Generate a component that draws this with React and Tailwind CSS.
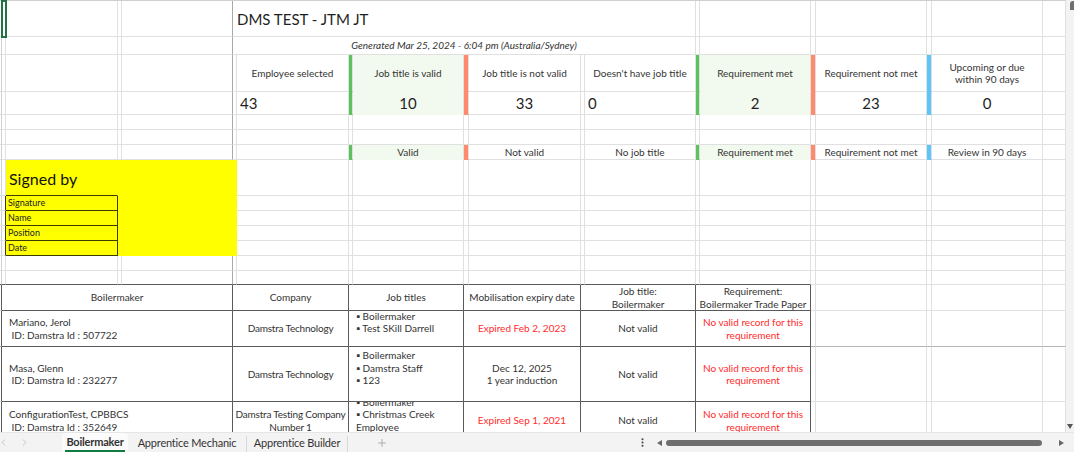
import clsx from 'clsx'
import { ChevronLeft, ChevronRight, Plus, EllipsisVertical } from 'lucide-react'

// column widths of the sheet (z = row gutter)
const COLS = ['z', 'a', 'b', 'c', 'd', 'e', 'f', 'g', 'h', 'i', 'j', 'k', 'l', 'M', 'n', 'o', 'p', 'q', 'r', 's']
const W = {
  z: 'w-[2px]', a: 'w-[4px]', b: 'w-[112px]', c: 'w-[4px]', d: 'w-[111px]', e: 'w-[4px]',
  f: 'w-[112px]', g: 'w-[4px]', h: 'w-[111px]', i: 'w-[5px]', j: 'w-[112px]', k: 'w-[4px]',
  l: 'w-[111px]', M: 'w-[4px]', n: 'w-[111px]', o: 'w-[5px]', p: 'w-[111px]', q: 'w-[5px]',
  r: 'w-[111px]', s: 'w-[23px]',
}

const GREEN = 'bg-[#5cc35c] border-b-[#5cc35c]'
const RED = 'bg-[#ff8a6e] border-b-[#ff8a6e]'
const BLUE = 'bg-[#5cc6fa] border-b-[#5cc6fa]'
const MINT = 'bg-[#f2f9ee] border-b-[#f2f9ee]'
const YELLOW = 'bg-[#ffff00] border-b-[#ffff00] border-r-[#ffff00]'

function Cell({ w, className, children }) {
  return (
    <div className={clsx('h-full shrink-0 border-r border-b border-[#e0e0e0] overflow-hidden', w, className)}>
      {children}
    </div>
  )
}

// one sheet row; o overrides a column, skip drops columns covered by a merge
function Row({ h, o = {}, skip = [] }) {
  return (
    <div className={clsx('flex shrink-0', h)}>
      {COLS.filter((k) => !skip.includes(k)).map((k) => {
        const c = o[k] || {}
        return (
          <Cell
            key={k}
            w={c.w || W[k]}
            className={clsx(k === 'd' && 'border-r-[#a9a9a9]', k === 'z' && 'border-r-[#d0d0d0]', c.cls)}
          >
            {c.children}
          </Cell>
        )
      })}
    </div>
  )
}

const center = 'flex items-center justify-center text-center'

function Label({ children }) {
  return <div className={clsx(center, 'h-full text-[10px] leading-[12px] text-[#333] px-1')}>{children}</div>
}

function Num({ children, left }) {
  return (
    <div className={clsx('h-full flex items-center text-[15px] text-[#1f1f1f]', left ? 'pl-[3px]' : 'justify-center')}>
      {children}
    </div>
  )
}

function Legend({ children }) {
  return <div className={clsx(center, 'h-full text-[10px] text-[#333]')}>{children}</div>
}

const rows = [
  {
    name: 'Mariano, Jerol',
    id: ' ID: Damstra Id : 507722',
    company: ['Damstra Technology'],
    jobs: ['▪ Boilermaker', '▪ Test SKill Darrell', ''],
    mob: ['Expired Feb 2, 2023'],
    expired: true,
    h: 'h-[36px]',
  },
  {
    name: 'Masa, Glenn',
    id: ' ID: Damstra Id : 232277',
    company: ['Damstra Technology'],
    jobs: ['▪ Boilermaker', '▪ Damstra Staff', '▪ 123', ''],
    mob: ['Dec 12, 2025', '1 year induction'],
    expired: false,
    h: 'h-[55px]',
  },
  {
    name: 'ConfigurationTest, CPBBCS',
    id: ' ID: Damstra Id : 352649',
    company: ['Damstra Testing Company', 'Number 1'],
    jobs: ['▪ Boilermaker', '▪ Christmas Creek', 'Employee', ''],
    mob: ['Expired Sep 1, 2021'],
    expired: true,
    h: 'h-[38px]',
  },
]

const TB = 'border-[#5a5a5a]'

function Lines({ lines, className }) {
  return (
    <div className={className}>
      {lines.map((l, i) => (
        <div key={i} className="h-[12.5px] whitespace-pre">{l}</div>
      ))}
    </div>
  )
}

function TableCell({ w, className, children }) {
  return (
    <div className={clsx('h-full shrink-0 border-r border-b overflow-hidden flex items-center', TB, w, className)}>
      {children}
    </div>
  )
}

function TailCells({ bottom }) {
  return (
    <>
      {['o', 'p', 'q', 'r', 's'].map((k) => (
        <Cell key={k} w={W[k]} className={bottom} />
      ))}
    </>
  )
}

function TableRow({ r, bottom }) {
  return (
    <div className={clsx('flex shrink-0 text-[10px] leading-[12.5px] text-[#333]', r.h)}>
      <Cell w={W.z} className={clsx('border-r-[#5a5a5a]', bottom)} />
      <TableCell w="w-[231px]">
        <Lines lines={[r.name, r.id]} className="pl-[7px]" />
      </TableCell>
      <TableCell w="w-[116px]" className="justify-center text-center">
        <Lines lines={r.company} className="tracking-[-0.2px]" />
      </TableCell>
      <TableCell w="w-[115px]">
        <Lines lines={r.jobs} className="pl-[7px]" />
      </TableCell>
      <TableCell w="w-[117px]" className={clsx('justify-center text-center', r.expired && 'text-[#ff2b2b]')}>
        <Lines lines={r.mob} />
      </TableCell>
      <TableCell w="w-[115px]" className="justify-center">
        Not valid
      </TableCell>
      <TableCell w="w-[115px]" className="justify-center text-center text-[#ff2b2b]">
        <Lines lines={['No valid record for this', 'requirement']} />
      </TableCell>
      <TailCells bottom={bottom} />
    </div>
  )
}

function Sheet() {
  return (
    <div className="w-[1066px] h-[432px] overflow-hidden flex flex-col">
      <div className="h-[1px] shrink-0 bg-[#cfcfcf]" />
      {/* title */}
      <Row
        h="h-[36px]"
        skip={['f', 'g', 'h', 'i', 'j', 'k', 'l']}
        o={{
          a: { cls: 'outline-2 outline-[#217346] -outline-offset-1 relative' },
          e: {
            w: 'w-[463px]',
            cls: 'overflow-visible',
            children: (
              <div className="h-full flex items-center pl-[4px] pt-[2px] text-[15px] text-[#1f1f1f]">DMS TEST - JTM JT</div>
            ),
          },
        }}
      />
      <Row
        h="h-[18px]"
        skip={['f', 'g', 'h', 'i', 'j', 'k', 'l']}
        o={{
          e: {
            w: 'w-[463px]',
            children: (
              <div className={clsx(center, 'h-full italic text-[10px] text-[#333]')}>
                Generated Mar 25, 2024 - 6:04 pm (Australia/Sydney)
              </div>
            ),
          },
        }}
      />
      {/* summary headings */}
      <Row
        h="h-[37px]"
        o={{
          f: { children: <Label>Employee selected</Label> },
          g: { cls: GREEN },
          h: { cls: MINT, children: <Label>Job title is valid</Label> },
          i: { cls: RED },
          j: { children: <Label>Job title is not valid</Label> },
          l: { children: <Label>Doesn't have job title</Label> },
          M: { cls: GREEN },
          n: { cls: MINT, children: <Label>Requirement met</Label> },
          o: { cls: RED },
          p: { children: <Label>Requirement not met</Label> },
          q: { cls: BLUE },
          r: { children: <Label>Upcoming or due within 90 days</Label> },
        }}
      />
      <Row
        h="h-[23px]"
        o={{
          f: { children: <Num left>43</Num> },
          g: { cls: GREEN },
          h: { cls: MINT, children: <Num>10</Num> },
          i: { cls: RED },
          j: { children: <Num>33</Num> },
          l: { children: <Num left>0</Num> },
          M: { cls: GREEN },
          n: { cls: MINT, children: <Num>2</Num> },
          o: { cls: RED },
          p: { children: <Num>23</Num> },
          q: { cls: BLUE },
          r: { children: <Num>0</Num> },
        }}
      />
      <Row h="h-[15px]" />
      <Row h="h-[15px]" />
      {/* legend */}
      <Row
        h="h-[15px]"
        o={{
          g: { cls: GREEN },
          h: { cls: MINT, children: <Legend>Valid</Legend> },
          i: { cls: RED },
          j: { children: <Legend>Not valid</Legend> },
          l: { children: <Legend>No job title</Legend> },
          M: { cls: GREEN },
          n: { cls: MINT, children: <Legend>Requirement met</Legend> },
          o: { cls: RED },
          p: { children: <Legend>Requirement not met</Legend> },
          q: { cls: BLUE },
          r: { children: <Legend>Review in 90 days</Legend> },
        }}
      />
      {/* signed by block */}
      <Row
        h="h-[36px]"
        o={{
          b: {
            cls: 'bg-[#ffff00] border-b-[#3d3d00] border-r-[#ffff00] overflow-visible',
            children: <div className="h-full flex items-center pl-[3px] pt-[2px] text-[16px] text-[#111] whitespace-nowrap">Signed by</div>,
          },
          c: { cls: YELLOW },
          d: { cls: YELLOW },
          e: { cls: YELLOW },
        }}
      />
      {['Signature', 'Name', 'Position', 'Date'].map((t) => (
        <Row
          key={t}
          h="h-[15px]"
          o={{
            a: { cls: 'border-r-[#3d3d00]' },
            b: {
              cls: 'bg-[#ffff00] border-b-[#3d3d00] border-r-[#3d3d00]',
              children: <div className="h-full flex items-center pl-[2px] text-[9px] text-[#222]">{t}</div>,
            },
            c: { cls: YELLOW },
            d: { cls: YELLOW },
            e: { cls: YELLOW },
          }}
        />
      ))}
      <Row h="h-[15px]" />
      <Row
        h="h-[14px]"
        o={Object.fromEntries(
          ['z', 'a', 'b', 'c', 'd', 'e', 'f', 'g', 'h', 'i', 'j', 'k', 'l', 'M', 'n'].map((k) => [k, { cls: 'border-b-[#5a5a5a]' }])
        )}
      />
      {/* table header */}
      <div className="flex shrink-0 h-[26px] text-[10px] leading-[12.5px] text-[#333]">
        <Cell w={W.z} className="border-r-[#5a5a5a]" />
        <TableCell w="w-[231px]" className="justify-center">Boilermaker</TableCell>
        <TableCell w="w-[116px]" className="justify-center">Company</TableCell>
        <TableCell w="w-[115px]" className="justify-center">Job titles</TableCell>
        <TableCell w="w-[117px]" className="justify-center">Mobilisation expiry date</TableCell>
        <TableCell w="w-[115px]" className="justify-center text-center">
          <Lines lines={['Job title:', 'Boilermaker']} />
        </TableCell>
        <TableCell w="w-[115px]" className="justify-center text-center">
          <Lines lines={['Requirement:', 'Boilermaker Trade Paper']} />
        </TableCell>
        <TailCells />
      </div>
      {rows.map((r, i) => (
        <TableRow key={r.name} r={r} bottom={i === 0 ? 'border-b-[#b4b4b4]' : ''} />
      ))}
    </div>
  )
}

function SheetTabs() {
  return (
    <div className="h-[20px] flex items-center bg-[#f3f3f3] text-[11px] tracking-[-0.2px] text-[#333] border-t border-[#e6e6e6]">
      <div className="w-[62px] h-full flex items-center text-[#b0b0b0]">
        <ChevronLeft size={11} strokeWidth={1.5} className="ml-[-2px]" />
        <ChevronRight size={11} strokeWidth={1.5} className="ml-[10px]" />
      </div>
      <div className="w-[66px] h-full flex items-end justify-center bg-[#fbfbfb] rounded-t-[4px]">
        <span className="font-bold leading-[16px] border-b-2 border-[#107c41] px-[1px]">Boilermaker</span>
      </div>
      <div className="w-[119px] h-[16px] flex items-center justify-center border-r border-[#d8d8d8] mt-[2px]">
        Apprentice Mechanic
      </div>
      <div className="w-[101px] h-[16px] flex items-center justify-center border-r border-[#d8d8d8] mt-[2px]">
        Apprentice Builder
      </div>
      <div className="w-[68px] flex justify-center text-[#9a9a9a]">
        <Plus size={12} strokeWidth={1.5} />
      </div>
      <div className="w-[220px]" />
      <div className="w-[12px] flex justify-center text-[#444]">
        <EllipsisVertical size={11} strokeWidth={2.5} />
      </div>
      <div className="w-[9px]" />
      <div className="w-0 h-0 border-y-[3.5px] border-y-transparent border-r-[5px] border-r-[#666]" />
      <div className="w-[4px]" />
      <div className="w-[376px] h-[6px] rounded-full bg-[#6f6f6f]" />
      <div className="w-[17px]" />
      <div className="w-0 h-0 border-y-[3.5px] border-y-transparent border-l-[5px] border-l-[#666]" />
    </div>
  )
}

export default function App() {
  return (
    <div className="w-[1074px] h-[452px] overflow-hidden bg-white flex flex-col font-['Lato','Noto_Sans',sans-serif]">
      <div className="flex h-[432px]">
        <Sheet />
        <div className="w-[8px] h-full bg-[#f3f3f3] flex flex-col items-end justify-between">
          <div className="w-[4px] h-[9px] mt-[1px] rounded-tl-[3px] bg-[#6f6f6f]" />
          <div className="w-0 h-0 mb-[3px] mr-[1px] border-x-[3px] border-x-transparent border-t-[5px] border-t-[#555]" />
        </div>
      </div>
      <SheetTabs />
    </div>
  )
}
